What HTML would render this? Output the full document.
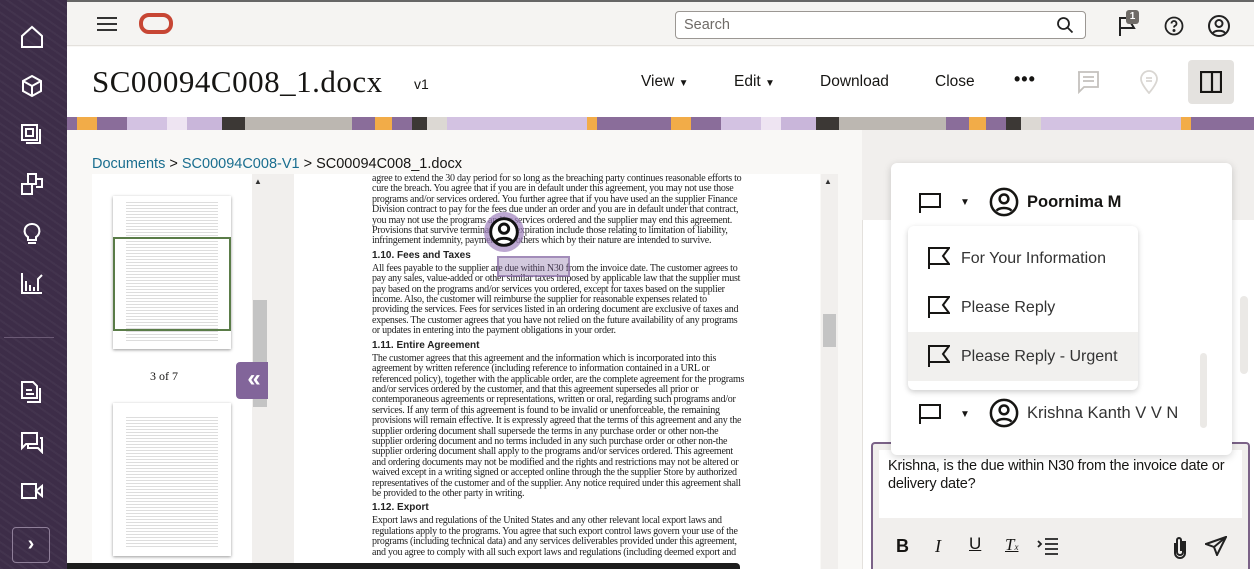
<!DOCTYPE html>
<html><head><meta charset="utf-8"><style>
*{box-sizing:border-box;margin:0;padding:0}
body{width:1254px;height:569px;overflow:hidden;font-family:"Liberation Sans",sans-serif;background:#f9f8f6;position:relative;color:#161513}
.abs{position:absolute}
#side{left:0;top:0;width:67px;height:569px;background:#3d2d48;background-image:repeating-linear-gradient(35deg,rgba(255,255,255,.03) 0 2px,transparent 2px 7px)}
#side svg{position:absolute;left:20px}
#top{left:67px;top:0;width:1187px;height:46px;background:#f5f4f2;border-bottom:1px solid #e4e1dd;border-top:2px solid #666}
#title{left:67px;top:47px;width:1187px;height:70px;background:#fff}
#banner{left:67px;top:117px;width:1187px;height:13px;background:repeating-linear-gradient(90deg,#8a6d9a 0 10px,#f2ac48 10px 30px,#8a6d9a 30px 60px,#d3c2e2 60px 100px,#eee4f2 100px 120px,#c9b6da 120px 155px,#3c3835 155px 178px,#bcb7b1 178px 285px,#8a6d9a 285px 308px,#f2ac48 308px 325px,#8a6d9a 325px 345px,#3c3835 345px 360px,#dcd8d3 360px 380px,#d3c2e2 380px 520px,#f2ac48 520px 530px,#8a6d9a 530px 594px)}
.doc{font-family:"Liberation Serif",serif;font-size:10px;line-height:10.4px;color:#222;white-space:nowrap;letter-spacing:-.25px}
.doc h4{font-family:"Liberation Sans",sans-serif;font-size:10px;font-weight:bold;margin:3px 0 3px;line-height:11px;letter-spacing:0}
.mi{position:absolute;left:0;width:230px;height:49px;font-size:16px;color:#333;padding-left:53px;line-height:49px;font-family:"Liberation Sans",sans-serif}
.mi svg{position:absolute;left:20px;top:13px}
</style></head><body>
<div id="side" class="abs">
<svg style="top:25px" width="24" height="24" viewBox="0 0 24 24" fill="none" stroke="#fff" stroke-width="2"><path d="M2 11L12 2l10 9v11H2z"/></svg>
<svg style="top:74px" width="24" height="24" viewBox="0 0 24 24" fill="none" stroke="#fff" stroke-width="2"><path d="M12 2l9 5v10l-9 5-9-5V7zM3 7l9 5 9-5M12 12v10"/></svg>
<svg style="top:123px" width="24" height="24" viewBox="0 0 24 24" fill="none" stroke="#fff" stroke-width="2"><path d="M2 2h15v15H2zM6 6h7v7H6zM20 6v14H6"/></svg>
<svg style="top:172px" width="24" height="24" viewBox="0 0 24 24" fill="none" stroke="#fff" stroke-width="2"><path d="M2 12h10v10H2zM12 12h4V2H8v10M16 7h6v8h-6"/></svg>
<svg style="top:222px" width="24" height="24" viewBox="0 0 24 24" fill="none" stroke="#fff" stroke-width="2"><path d="M12 2a7 7 0 0 0-4 13v3h8v-3a7 7 0 0 0-4-13zM8 21h8"/></svg>
<svg style="top:271px" width="24" height="24" viewBox="0 0 24 24" fill="none" stroke="#fff" stroke-width="2"><path d="M2 2v20h20M6 20V10M10 20v-6M14 20v-4M18 20V8l4-4"/></svg>
<div class="abs" style="left:4px;top:337px;width:50px;height:1px;background:#6b5a75"></div>
<svg style="top:380px" width="24" height="24" viewBox="0 0 24 24" fill="none" stroke="#fff" stroke-width="2"><path d="M2 2h11l4 4v12H2zM6 10h6M6 14h8M20 8v14H7"/></svg>
<svg style="top:430px" width="24" height="24" viewBox="0 0 24 24" fill="none" stroke="#fff" stroke-width="2"><path d="M2 3h15v11H6l-4 4zM20 8h2v14l-4-4H8v-3"/></svg>
<svg style="top:479px" width="24" height="24" viewBox="0 0 24 24" fill="none" stroke="#fff" stroke-width="2"><path d="M2 5h14v14H2zM16 12l6-5v10z"/></svg>
<div class="abs" style="left:12px;top:527px;width:38px;height:36px;border:1px solid #8f7f99;border-radius:4px;color:#fff;font-size:20px;text-align:center;line-height:32px;font-weight:bold">›</div>
</div>
<div id="top" class="abs">
<svg class="abs" style="left:30px;top:14px" width="20" height="16" viewBox="0 0 20 16" stroke="#333" stroke-width="2"><path d="M0 2h20M0 8h20M0 14h20"/></svg>
<div class="abs" style="left:72px;top:11px;width:34px;height:21px;border:4px solid #c74634;border-radius:10px"></div>
<div class="abs" style="left:608px;top:9px;width:411px;height:28px;background:#fff;border:1px solid #9b9793;border-radius:4px;font-size:14.5px;color:#6f6b67;padding:5px 8px">Search</div>
<svg class="abs" style="left:989px;top:14px" width="18" height="18" viewBox="0 0 18 18" fill="none" stroke="#222" stroke-width="1.8"><circle cx="7.5" cy="7.5" r="5.5"/><path d="M11.5 11.5l5 5"/></svg>
<svg class="abs" style="left:1050px;top:13px" width="20" height="22" viewBox="0 0 20 22" fill="none" stroke="#222" stroke-width="2"><path d="M3 21V3h14l-3 5 3 5H3"/></svg>
<div class="abs" style="left:1059px;top:8px;width:13px;height:14px;background:#6f6b67;color:#fff;font-size:10px;border-radius:3px;text-align:center;line-height:14px;font-weight:bold">1</div>
<svg class="abs" style="left:1097px;top:14px" width="20" height="20" viewBox="0 0 20 20" fill="none" stroke="#222" stroke-width="1.8"><circle cx="10" cy="10" r="8.5"/><path d="M7.5 7.5a2.5 2.5 0 1 1 3.5 2.3c-.8.4-1 .9-1 1.7"/><circle cx="10" cy="14.5" r=".6" fill="#222"/></svg>
<svg class="abs" style="left:1140px;top:12px" width="24" height="24" viewBox="0 0 24 24" fill="none" stroke="#222" stroke-width="2"><circle cx="12" cy="12" r="10"/><circle cx="12" cy="9.5" r="3.5"/><path d="M6 19c2-3 10-3 12 0"/></svg>
</div>
<div id="title" class="abs">
<div class="abs" style="left:25px;top:17px;font-family:'Liberation Serif',serif;font-size:31px;letter-spacing:.5px;color:#161513">SC00094C008_1.docx</div>
<div class="abs" style="left:347px;top:29px;font-size:14px">v1</div>
<div class="abs" style="left:574px;top:26px;font-size:15.5px">View <span style="font-size:10px">▼</span></div>
<div class="abs" style="left:667px;top:26px;font-size:15.5px">Edit <span style="font-size:10px">▼</span></div>
<div class="abs" style="left:753px;top:26px;font-size:15.5px">Download</div>
<div class="abs" style="left:868px;top:26px;font-size:15.5px">Close</div>
<div class="abs" style="left:947px;top:22px;font-size:18px;font-weight:bold;letter-spacing:1px">•••</div>
<svg class="abs" style="left:1010px;top:24px" width="22" height="24" viewBox="0 0 22 24" fill="none" stroke="#c4c1bd" stroke-width="1.8"><path d="M1 1h20v15H7l-5 5V1zM6 6h11M6 10h11"/></svg>
<svg class="abs" style="left:1073px;top:23px" width="18" height="24" viewBox="0 0 18 24" fill="none" stroke="#d9d6d2" stroke-width="1.8"><path d="M9 23S1 14 1 9a8 8 0 0 1 16 0c0 5-8 14-8 14zM6 8h6M6 11h6"/></svg>
<div class="abs" style="left:1121px;top:13px;width:46px;height:44px;background:#e4e2df;border-radius:4px"></div>
<svg class="abs" style="left:1133px;top:24px" width="22" height="22" viewBox="0 0 22 22" fill="none" stroke="#161513" stroke-width="2.2"><rect x="1" y="1" width="20" height="20"/><path d="M12 1v20"/></svg>
</div>
<div id="banner" class="abs"></div>
<div class="abs" style="left:92px;top:156px;font-size:14.5px;color:#161513"><span style="color:#1a6e8f">Documents</span> &gt; <span style="color:#1a6e8f">SC00094C008-V1</span> &gt; SC00094C008_1.docx</div>
<div class="abs" style="left:92px;top:174px;width:160px;height:395px;background:#fff"></div>
<div class="abs" style="left:113px;top:196px;width:118px;height:153px;background:#fff;box-shadow:0 1px 3px rgba(0,0,0,.4);background-image:repeating-linear-gradient(180deg,#ddd 0 1px,transparent 1px 3px);background-size:92px 140px;background-position:13px 6px;background-repeat:no-repeat"></div>
<div class="abs" style="left:113px;top:237px;width:118px;height:94px;border:2px solid #5a7c48"></div>
<div class="abs" style="left:150px;top:369px;font-family:'Liberation Serif',serif;font-size:12px">3 of 7</div>
<div class="abs" style="left:113px;top:403px;width:118px;height:153px;background:#fff;box-shadow:0 1px 3px rgba(0,0,0,.4);background-image:repeating-linear-gradient(180deg,#ddd 0 1px,transparent 1px 3px);background-size:92px 130px;background-position:13px 14px;background-repeat:no-repeat"></div>
<div class="abs" style="left:252px;top:174px;width:16px;height:395px;background:#f1efed"></div>
<div class="abs" style="left:253px;top:300px;width:14px;height:107px;background:#c4c4c4"></div>
<div class="abs" style="left:254px;top:177px;font-size:8px;color:#333">▲</div>
<div class="abs" style="left:236px;top:362px;width:36px;height:37px;background:#82659a;border-radius:4px 0 0 4px;color:#fff;font-size:24px;text-align:center;line-height:34px;font-weight:bold">«</div>
<div class="abs" style="left:268px;top:174px;width:26px;height:395px;background:#f1efed"></div>
<div class="abs" style="left:294px;top:174px;width:526px;height:395px;background:#fff"></div>
<div class="abs doc" style="left:372px;top:174px">
agree to extend the 30 day period for so long as the breaching party continues reasonable efforts to<br>cure the breach. You agree that if you are in default under this agreement, you may not use those<br>programs and/or services ordered. You further agree that if you have used an the supplier Finance<br>Division contract to pay for the fees due under an order and you are in default under that contract,<br>you may not use the programs and/or services ordered and the supplier may end this agreement.<br>Provisions that survive termination or expiration include those relating to limitation of liability,<br>infringement indemnity, payment and others which by their nature are intended to survive.
<h4>1.10. Fees and Taxes</h4>
All fees payable to the supplier are due within N30 from the invoice date. The customer agrees to<br>pay any sales, value-added or other similar taxes imposed by applicable law that the supplier must<br>pay based on the programs and/or services you ordered, except for taxes based on the supplier<br>income. Also, the customer will reimburse the supplier for reasonable expenses related to<br>providing the services. Fees for services listed in an ordering document are exclusive of taxes and<br>expenses. The customer agrees that you have not relied on the future availability of any programs<br>or updates in entering into the payment obligations in your order.
<h4>1.11. Entire Agreement</h4>
The customer agrees that this agreement and the information which is incorporated into this<br>agreement by written reference (including reference to information contained in a URL or<br>referenced policy), together with the applicable order, are the complete agreement for the programs<br>and/or services ordered by the customer, and that this agreement supersedes all prior or<br>contemporaneous agreements or representations, written or oral, regarding such programs and/or<br>services. If any term of this agreement is found to be invalid or unenforceable, the remaining<br>provisions will remain effective. It is expressly agreed that the terms of this agreement and any the<br>supplier ordering document shall supersede the terms in any purchase order or other non-the<br>supplier ordering document and no terms included in any such purchase order or other non-the<br>supplier ordering document shall apply to the programs and/or services ordered. This agreement<br>and ordering documents may not be modified and the rights and restrictions may not be altered or<br>waived except in a writing signed or accepted online through the the supplier Store by authorized<br>representatives of the customer and of the supplier. Any notice required under this agreement shall<br>be provided to the other party in writing.
<h4>1.12. Export</h4>
Export laws and regulations of the United States and any other relevant local export laws and<br>regulations apply to the programs. You agree that such export control laws govern your use of the<br>programs (including technical data) and any services deliverables provided under this agreement,<br>and you agree to comply with all such export laws and regulations (including deemed export and
</div>
<div class="abs" style="left:497px;top:256px;width:73px;height:21px;background:rgba(130,100,160,.35);border:2px solid rgba(130,100,160,.6)"></div>
<div class="abs" style="left:484px;top:212px;width:40px;height:40px;border-radius:50%;background:rgba(160,130,190,.7)"></div>
<svg class="abs" style="left:488px;top:216px" width="32" height="32" viewBox="0 0 24 24" fill="#fff" stroke="#111" stroke-width="2.2"><circle cx="12" cy="12" r="10"/><circle cx="12" cy="9.5" r="3.5" fill="none"/><path d="M6 19c2-3 10-3 12 0" fill="none"/></svg>
<div class="abs" style="left:821px;top:174px;width:17px;height:395px;background:#f1efed"></div>
<div class="abs" style="left:823px;top:314px;width:13px;height:33px;background:#c4c4c4"></div>
<div class="abs" style="left:824px;top:177px;font-size:8px;color:#333">▲</div>
<div class="abs" style="left:67px;top:563px;width:673px;height:6px;background:#1d1d1d;border-radius:0 4px 0 0"></div>
<div class="abs" style="left:862px;top:130px;width:392px;height:439px;background:#fff;border-left:1px solid #e4e1dd"></div>
<div class="abs" style="left:862px;top:130px;width:392px;height:90px;background:#f1efed"></div>
<div class="abs" style="left:1240px;top:296px;width:8px;height:78px;background:#ebe9e6;border-radius:4px"></div>
<div class="abs" style="left:1139px;top:232px;width:77px;height:36px;border:1px solid #9b9793;border-left:none;border-radius:0 4px 4px 0;background:#fff"></div>
<svg class="abs" style="left:1188px;top:241px" width="18" height="18" viewBox="0 0 18 18" fill="none" stroke="#222" stroke-width="1.8"><circle cx="7.5" cy="7.5" r="5.5"/><path d="M11.5 11.5l5 5"/></svg>
<div class="abs" style="left:1141px;top:308px;font-size:16px;color:#1a6e8f">Flag All</div>
<div class="abs" style="left:871px;top:442px;width:379px;height:127px;border:2px solid #7b6287;border-bottom:none;border-radius:4px 4px 0 0;background:#f1efed"></div>
<div class="abs" style="left:879px;top:450px;width:363px;height:68px;background:#fff;font-size:14.5px;line-height:18px;padding:7px 9px;color:#161513;letter-spacing:-.2px">Krishna, is the due within N30 from the invoice date or delivery date?</div>
<div class="abs" style="left:896px;top:536px;font-size:18px;font-weight:bold">B</div>
<div class="abs" style="left:935px;top:536px;font-size:18px;font-style:italic;font-family:'Liberation Serif',serif">I</div>
<div class="abs" style="left:969px;top:534px;font-size:17px;text-decoration:underline">U</div>
<div class="abs" style="left:1005px;top:535px;font-size:17px;font-style:italic;text-decoration:underline;font-family:'Liberation Serif',serif">T<span style="font-size:9px">x</span></div>
<svg class="abs" style="left:1037px;top:537px" width="22" height="20" viewBox="0 0 22 20" fill="none" stroke="#222" stroke-width="1.8"><path d="M1 4l3 3-3 3M8 2h13M8 7h13M8 12h13M8 17h13"/></svg>
<svg class="abs" style="left:1172px;top:535px" width="16" height="24" viewBox="0 0 16 24" fill="none" stroke="#222" stroke-width="2"><path d="M11 6v11a3 3 0 0 1-6 0V5a2 2 0 0 1 4 0v11"/><path d="M3 8v10a5 5 0 0 0 10 0V6"/></svg>
<svg class="abs" style="left:1205px;top:536px" width="22" height="20" viewBox="0 0 22 20" fill="none" stroke="#222" stroke-width="2"><path d="M21 1L1 8l8 3 3 8zM9 11l12-10"/></svg>
<div class="abs" style="left:891px;top:163px;width:341px;height:292px;background:#fff;border-radius:6px;box-shadow:0 2px 8px rgba(0,0,0,.18)">
<svg class="abs" style="left:28px;top:30px" width="22" height="20" viewBox="0 0 22 20" fill="none" stroke="#161513" stroke-width="2"><path d="M1 20V1h20v13H1"/></svg>
<div class="abs" style="left:69px;top:34px;font-size:10px">▼</div>
<svg class="abs" style="left:98px;top:24px" width="30" height="30" viewBox="0 0 24 24" fill="none" stroke="#161513" stroke-width="2"><circle cx="12" cy="12" r="10.5"/><circle cx="12" cy="9.5" r="3.5"/><path d="M6 19c2-3 10-3 12 0"/></svg>
<div class="abs" style="left:136px;top:30px;font-size:16.5px;font-weight:bold">Poornima M</div>
<svg class="abs" style="left:28px;top:241px" width="22" height="20" viewBox="0 0 22 20" fill="none" stroke="#161513" stroke-width="2"><path d="M1 20V1h20v13H1"/></svg>
<div class="abs" style="left:69px;top:246px;font-size:10px">▼</div>
<svg class="abs" style="left:98px;top:235px" width="30" height="30" viewBox="0 0 24 24" fill="none" stroke="#161513" stroke-width="2"><circle cx="12" cy="12" r="10.5"/><circle cx="12" cy="9.5" r="3.5"/><path d="M6 19c2-3 10-3 12 0"/></svg>
<div class="abs" style="left:136px;top:241px;font-size:16.5px;color:#333">Krishna Kanth V V N</div>
<div class="abs" style="left:309px;top:190px;width:7px;height:75px;background:#ebe9e6;border-radius:4px"></div>
</div>
<div class="abs" style="left:908px;top:226px;width:230px;height:164px;background:#fff;border-radius:6px;box-shadow:0 2px 6px rgba(0,0,0,.2);overflow:hidden">
<div class="mi" style="top:8px"><svg width="22" height="22" viewBox="0 0 22 22" fill="none" stroke="#161513" stroke-width="2"><path d="M1 22V1h20l-6 8 6 8H1"/></svg>For Your Information</div>
<div class="mi" style="top:57px"><svg width="22" height="22" viewBox="0 0 22 22" fill="none" stroke="#161513" stroke-width="2"><path d="M1 22V1h20l-6 8 6 8H1"/></svg>Please Reply</div>
<div class="mi" style="top:106px;background:#f1f0ee"><svg width="22" height="22" viewBox="0 0 22 22" fill="none" stroke="#161513" stroke-width="2"><path d="M1 22V1h20l-6 8 6 8H1"/></svg>Please Reply - Urgent</div>
</div>
</body></html>
